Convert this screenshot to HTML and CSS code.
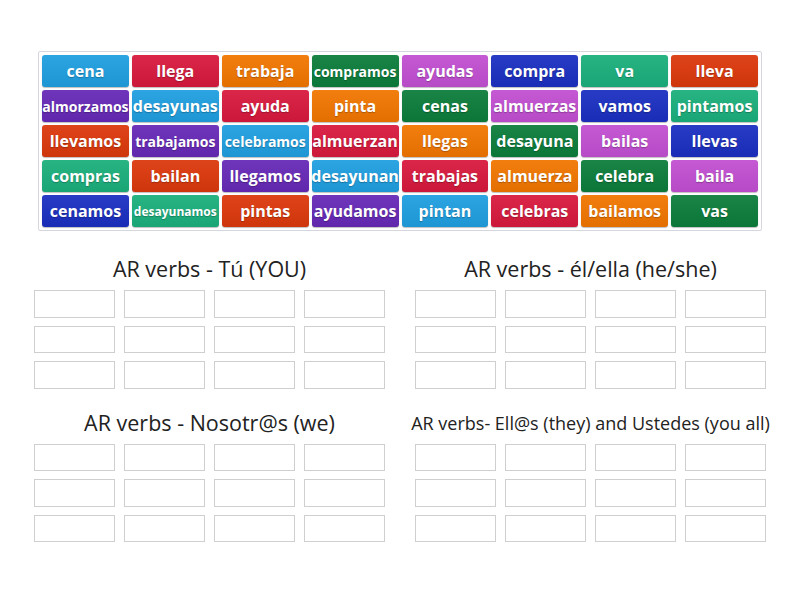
FILE: index.html
```html
<!DOCTYPE html>
<html lang="es">
<head>
<meta charset="utf-8">
<title>AR verbs</title>
<link rel="stylesheet" href="styles.css">
</head>
<body>
<div class="page">
  <div class="bank">
    <div class="tile c-lb">cena</div>
    <div class="tile c-rd">llega</div>
    <div class="tile c-or">trabaja</div>
    <div class="tile c-gr s14">compramos</div>
    <div class="tile c-mg">ayudas</div>
    <div class="tile c-db">compra</div>
    <div class="tile c-tl">va</div>
    <div class="tile c-ro">lleva</div>

    <div class="tile c-pu s14">almorzamos</div>
    <div class="tile c-lb">desayunas</div>
    <div class="tile c-rd">ayuda</div>
    <div class="tile c-or">pinta</div>
    <div class="tile c-gr">cenas</div>
    <div class="tile c-mg">almuerzas</div>
    <div class="tile c-db">vamos</div>
    <div class="tile c-tl">pintamos</div>

    <div class="tile c-ro">llevamos</div>
    <div class="tile c-pu s14">trabajamos</div>
    <div class="tile c-lb s14">celebramos</div>
    <div class="tile c-rd">almuerzan</div>
    <div class="tile c-or">llegas</div>
    <div class="tile c-gr">desayuna</div>
    <div class="tile c-mg">bailas</div>
    <div class="tile c-db">llevas</div>

    <div class="tile c-tl">compras</div>
    <div class="tile c-ro">bailan</div>
    <div class="tile c-pu">llegamos</div>
    <div class="tile c-lb">desayunan</div>
    <div class="tile c-rd">trabajas</div>
    <div class="tile c-or">almuerza</div>
    <div class="tile c-gr">celebra</div>
    <div class="tile c-mg">baila</div>

    <div class="tile c-db">cenamos</div>
    <div class="tile c-tl s12">desayunamos</div>
    <div class="tile c-ro">pintas</div>
    <div class="tile c-pu">ayudamos</div>
    <div class="tile c-lb">pintan</div>
    <div class="tile c-rd">celebras</div>
    <div class="tile c-or">bailamos</div>
    <div class="tile c-gr">vas</div>
  </div>

  <div class="groups">
    <div class="group">
      <div class="title"><span>AR verbs - Tú (YOU)</span></div>
      <div class="slots">
        <div class="slot"></div><div class="slot"></div><div class="slot"></div><div class="slot"></div>
        <div class="slot"></div><div class="slot"></div><div class="slot"></div><div class="slot"></div>
        <div class="slot"></div><div class="slot"></div><div class="slot"></div><div class="slot"></div>
      </div>
    </div>
    <div class="group">
      <div class="title"><span>AR verbs - él/ella (he/she)</span></div>
      <div class="slots">
        <div class="slot"></div><div class="slot"></div><div class="slot"></div><div class="slot"></div>
        <div class="slot"></div><div class="slot"></div><div class="slot"></div><div class="slot"></div>
        <div class="slot"></div><div class="slot"></div><div class="slot"></div><div class="slot"></div>
      </div>
    </div>
    <div class="group">
      <div class="title"><span>AR verbs - Nosotr@s (we)</span></div>
      <div class="slots">
        <div class="slot"></div><div class="slot"></div><div class="slot"></div><div class="slot"></div>
        <div class="slot"></div><div class="slot"></div><div class="slot"></div><div class="slot"></div>
        <div class="slot"></div><div class="slot"></div><div class="slot"></div><div class="slot"></div>
      </div>
    </div>
    <div class="group">
      <div class="title small"><span>AR verbs- Ell@s (they) and Ustedes (you all)</span></div>
      <div class="slots">
        <div class="slot"></div><div class="slot"></div><div class="slot"></div><div class="slot"></div>
        <div class="slot"></div><div class="slot"></div><div class="slot"></div><div class="slot"></div>
        <div class="slot"></div><div class="slot"></div><div class="slot"></div><div class="slot"></div>
      </div>
    </div>
  </div>
</div>
</body>
</html>
```

FILE: styles.css
```css
html, body {
  margin: 0;
  padding: 0;
  background: #ffffff;
}

body {
  font-family: "Open Sans", "DejaVu Sans", sans-serif;
  color: #222222;
}

.page {
  width: 800px;
  height: 600px;
  padding-top: 51px;
  box-sizing: border-box;
}

.bank {
  margin-left: 38px;
  width: 724px;
  box-sizing: border-box;
  border: 1px solid #d6d6de;
  border-radius: 2px;
  padding: 3px;
  display: grid;
  grid-template-columns: repeat(8, 1fr);
  column-gap: 3px;
  row-gap: 3px;
}

.tile {
  height: 32px;
  border-radius: 3px;
  display: flex;
  align-items: center;
  justify-content: center;
  color: #ffffff;
  font-weight: 700;
  font-size: 16px;
  white-space: nowrap;
  overflow: hidden;
  text-shadow: 0 1px 1px rgba(0, 0, 0, 0.25);
  box-shadow: 0 1px 1px rgba(0, 0, 0, 0.25);
  background-image: linear-gradient(to bottom, rgba(255, 255, 255, 0.06), rgba(0, 0, 0, 0.06));
}

.s14 { font-size: 14px; }
.s12 { font-size: 12px; }

.c-lb { background-color: #1f9fe0; }
.c-rd { background-color: #d8193d; }
.c-or { background-color: #f17600; }
.c-gr { background-color: #0b7d3b; }
.c-mg { background-color: #c24fd2; }
.c-db { background-color: #1b2fc1; }
.c-tl { background-color: #1baf7c; }
.c-ro { background-color: #dc380c; }
.c-pu { background-color: #6629b7; }

.groups {
  margin-top: 24px;
  margin-left: 34px;
  width: 732px;
  display: grid;
  grid-template-columns: 351px 351px;
  column-gap: 30px;
  row-gap: 20px;
}

.title {
  height: 28px;
  line-height: 28px;
  margin-bottom: 7px;
  font-size: 21.5px;
  display: flex;
  justify-content: center;
  white-space: nowrap;
  color: #222222;
}

.title span {
  flex: none;
}

.title.small {
  font-size: 18px;
}

.slots {
  display: grid;
  grid-template-columns: repeat(4, 1fr);
  column-gap: 9px;
  row-gap: 8px;
}

.slot {
  height: 27.5px;
  box-sizing: border-box;
  border: 1px solid #cfcfcf;
  background: #ffffff;
}
```
